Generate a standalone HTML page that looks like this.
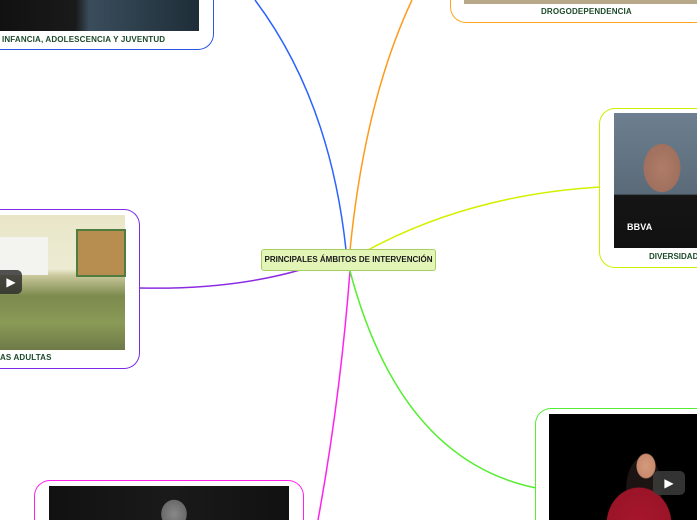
<!DOCTYPE html>
<html style="width:697px;height:520px;overflow:hidden"><head><meta charset="utf-8"><style>
html,body{margin:0;width:697px;height:520px;overflow:hidden}
body{background:#fff;position:relative;font-family:"Liberation Sans",sans-serif}
.wrap{position:absolute;left:0;top:0;width:697px;height:520px;overflow:hidden}
.box{position:absolute;border:1.5px solid;border-radius:16px;background:#fff;box-sizing:border-box}
.img{position:absolute}
.lbl{position:absolute;font-size:8px;font-weight:bold;color:#1d4a2a;white-space:nowrap;letter-spacing:0.15px}
svg{position:absolute;left:0;top:0}
</style></head><body><div class="wrap">
<svg width="697" height="520">
<path d="M255,0 Q330,100 346,250" stroke="#2b63ff" stroke-width="1.5" fill="none"/>
<path d="M412,0 Q365,100 350,250" stroke="#ff9a1a" stroke-width="1.5" fill="none"/>
<path d="M368,250 Q470,195 600,187" stroke="#d4f000" stroke-width="1.5" fill="none"/>
<path d="M300,270 Q230,290 139,288" stroke="#8a2be2" stroke-width="1.5" fill="none"/>
<path d="M350,271 Q340,400 318,520" stroke="#ff22ee" stroke-width="1.5" fill="none"/>
<path d="M350,271 Q400,460 536,488" stroke="#55ee33" stroke-width="1.5" fill="none"/>
</svg>

<div class="box" style="left:0;top:0;width:214px;height:50px;border-color:#2b55e6;border-top:none;border-left:none;border-radius:0 0 16px 0"></div>
<div class="img" style="left:0;top:0;width:199px;height:31px;background:linear-gradient(90deg,#111 0,#1a1a1a 38%,#3a4d5c 45%,#1e2d38 100%)"></div>
<div class="lbl" style="left:2px;top:35px">INFANCIA, ADOLESCENCIA Y JUVENTUD</div>

<div class="box" style="left:450px;top:0;width:247px;height:23px;border-color:#ffa41c;border-top:none;border-right:none;border-radius:0 0 0 16px"></div>
<div class="img" style="left:464px;top:0;width:233px;height:4px;background:#b8a88a"></div>
<div class="lbl" style="left:541px;top:7px">DROGODEPENDENCIA</div>

<div class="box" style="left:599px;top:108px;width:98px;height:160px;border-color:#ccf000;border-right:none;border-radius:16px 0 0 16px"></div>
<div class="img" style="left:614px;top:113px;width:83px;height:135px;background:radial-gradient(ellipse 26px 34px at 48px 55px,#b07c68 0,#a0705e 70%,transparent 72%),linear-gradient(#6d7f90,#5a6a78 60%,#151515 61%,#111)"></div>
<div class="lbl" style="left:627px;top:222px;color:#fff;font-size:9px">BBVA</div>
<div class="lbl" style="left:649px;top:252px;letter-spacing:0">DIVERSIDAD</div>

<div class="box" style="left:0;top:209px;width:140px;height:160px;border-color:#7b2be6;border-left:none;border-radius:0 16px 16px 0"></div>
<div class="img" style="left:0;top:215px;width:125px;height:135px;background:linear-gradient(#e9e6c8 0,#ecebd2 40%,#c9c79a 45%,#7c8a4e 60%,#8a9a56 80%,#6e7a48 100%)"></div>
<div class="img" style="left:76px;top:229px;width:46px;height:44px;background:#b88e50;border:2px solid #4f7d40"></div>
<div class="img" style="left:0;top:237px;width:48px;height:38px;background:#f3f3f0"></div>
<div class="img" style="left:0;top:270px;width:22px;height:24px;background:rgba(40,40,40,.8);border-radius:0 5px 5px 0;color:#fff;font-size:12px;line-height:24px;text-align:center">▶</div>
<div class="lbl" style="left:0;top:353px">AS ADULTAS</div>

<div class="box" style="left:535px;top:408px;width:162px;height:112px;border-color:#55ee33;border-right:none;border-bottom:none;border-radius:16px 0 0 0"></div>
<div class="img" style="left:549px;top:414px;width:148px;height:106px;background:radial-gradient(ellipse 10px 13px at 97px 52px,#d49a7c 0,#c88a6c 90%,transparent 100%),radial-gradient(ellipse 40px 45px at 90px 110px,#a8162c 0,#9a1428 80%,transparent 82%),radial-gradient(ellipse 22px 40px at 95px 75px,#1c1412 0,#1c1412 80%,transparent 82%),#000"></div>
<div class="img" style="left:653px;top:471px;width:32px;height:24px;background:rgba(60,60,60,.85);border-radius:5px;color:#fff;font-size:12px;line-height:24px;text-align:center">▶</div>

<div class="box" style="left:34px;top:480px;width:270px;height:40px;border-color:#ff22ee;border-bottom:none;border-radius:16px 16px 0 0"></div>
<div class="img" style="left:49px;top:486px;width:240px;height:34px;background:radial-gradient(ellipse 18px 20px at 125px 28px,#888 0,#6a6a6a 70%,transparent 72%),linear-gradient(90deg,#111,#1a1a1a 50%,#111)"></div>

<div style="position:absolute;left:261px;top:249px;width:175px;height:22px;box-sizing:border-box;background:#e2f4b6;border:1px solid #a5cf60;border-radius:3px;font-size:8px;font-weight:bold;color:#1a1a1a;text-align:center;line-height:20px">PRINCIPALES ÁMBITOS DE INTERVENCIÓN</div>
</div></body></html>
